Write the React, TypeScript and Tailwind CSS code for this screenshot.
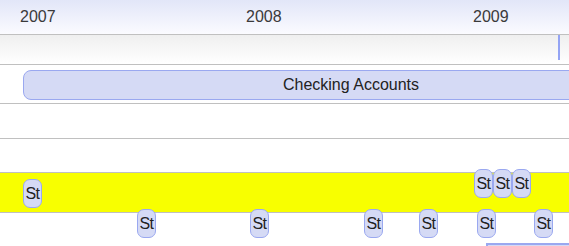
const font = { fontFamily: '"Liberation Sans", Arial, sans-serif' }

const yellowBadges = [
  { x: 23, y: 179 },
  { x: 474, y: 169 },
  { x: 493, y: 169 },
  { x: 512, y: 169 },
]

const lowerBadges = [137, 250, 364, 419, 477, 534]

function Badge({ x, y }: { x: number; y: number }) {
  return (
    <div
      className="absolute w-[19px] h-[29px] rounded-[7px] bg-[#d5daf5] border border-[#9aa8f0] flex items-center justify-center overflow-hidden text-[16px] text-[#222] tracking-[-0.5px]"
      style={{ left: x, top: y }}
    >
      St
    </div>
  )
}

export default function App() {
  return (
    <div className="relative w-[569px] h-[246px] overflow-hidden bg-white" style={font}>
      {/* year header */}
      <div className="h-[35px] border-b border-[#c0c0c0] bg-gradient-to-b from-[#e2e6f8] to-[#fbfbff] flex items-center text-[16px] text-[#3a3a3a]">
        <span className="w-[226px] pl-[20px]">2007</span>
        <span className="w-[227px] pl-[20px]">2008</span>
        <span className="pl-[20px]">2009</span>
      </div>

      <div className="h-[30px] border-b border-[#c0c0c0] bg-gradient-to-b from-[#efefef] to-white flex justify-end pr-[9px]">
        <div className="w-[2px] h-[25px] bg-[#94a4f4]" />
      </div>

      <div className="h-[39px] border-b border-[#c0c0c0] pt-[5px] pl-[23px]">
        <div className="w-[656px] h-[30px] rounded-[8px] bg-[#d5daf5] border border-[#9aa8f0] flex items-center justify-center text-[16px] text-[#222]">
          Checking Accounts
        </div>
      </div>

      <div className="h-[35px] border-b border-[#c0c0c0]" />
      <div className="h-[34px] border-b border-[#c0c0c0]" />
      <div className="h-[40px] border-b border-[#c0c0c0] bg-[#f8ff00]" />

      {yellowBadges.map((b, i) => (
        <Badge key={i} x={b.x} y={b.y} />
      ))}
      {lowerBadges.map((x, i) => (
        <Badge key={'l' + i} x={x} y={209} />
      ))}

      <div className="absolute left-[486px] top-[243px] w-[100px] h-[10px] border-t-2 border-l-2 border-[#9aa8f0] bg-[#d5daf5]" />
    </div>
  )
}
